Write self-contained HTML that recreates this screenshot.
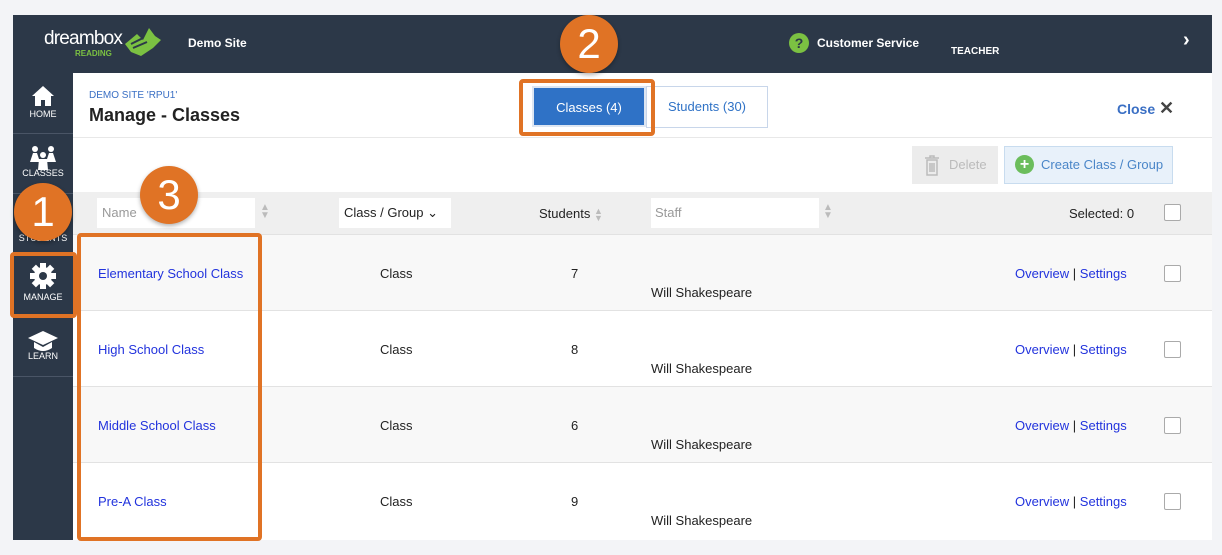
<!DOCTYPE html><html><head><style>
*{margin:0;padding:0;box-sizing:border-box}
body{width:1222px;height:555px;background:#f3f4f7;font-family:"Liberation Sans",sans-serif;position:relative;overflow:hidden;font-size:13px;color:#222}
.a{position:absolute}
.hdr{left:13px;top:15px;width:1199px;height:58px;background:#2c3848}
.side{left:13px;top:73px;width:60px;height:467px;background:#2c3848}
.main{left:73px;top:73px;width:1139px;height:467px;background:#fff}
.nav{position:absolute;left:0;width:60px;color:#fff;font-size:9px;text-align:center;border-bottom:1px solid #4a5566}
.row{position:absolute;left:0;width:1139px;height:76px;border-top:1px solid #e2e2e2}
.lk{color:#2233dd}
.cb{position:absolute;width:17px;height:17px;border:1.5px solid #aaa;background:#fff;border-radius:2px}
.badge{position:absolute;width:58px;height:58px;border-radius:50%;background:#e07325;color:#fff;font-size:42px;text-align:center;line-height:58px;box-shadow:0 2px 4px rgba(0,0,0,.3)}
.ob{position:absolute;border:4px solid #e07325;border-radius:4px}
</style></head><body>
<div class="a hdr">
 <div class="a" style="left:31px;top:13px;color:#fff;font-size:19px;letter-spacing:-.8px">dreambox</div>
 <div class="a" style="left:62px;top:34px;color:#7bc142;font-size:8px;font-weight:bold">READING</div>
 <svg class="a" style="left:110px;top:10px" width="40" height="34" viewBox="0 0 40 32"><path d="M2 18 L14 8 L20 14 L26 2 L32 10 L38 14 L30 22 L18 30 L8 26 Z" fill="#7bc142"/><path d="M8 18 L20 12 M10 22 L24 16" stroke="#2c3848" stroke-width="2"/></svg>
 <div class="a" style="left:175px;top:21px;color:#fff;font-size:12px;font-weight:bold">Demo Site</div>
 <div class="a" style="left:776px;top:18px;width:20px;height:20px;border-radius:50%;background:#7bc142;color:#2c3848;font-weight:bold;text-align:center;line-height:20px;font-size:14px">?</div>
 <div class="a" style="left:804px;top:21px;color:#fff;font-size:12px;font-weight:bold">Customer Service</div>
 <div class="a" style="left:938px;top:31px;color:#fff;font-size:10px;font-weight:bold">TEACHER</div>
 <div class="a" style="left:1170px;top:14px;color:#fff;font-size:20px;font-weight:bold">›</div>
</div>
<div class="a side">
 <div class="nav" style="top:0;height:61px"><svg width="24" height="22" viewBox="0 0 24 22" style="margin-top:12px"><path d="M12 1 L23 11 H20 V21 H14 V15 H10 V21 H4 V11 H1 Z" fill="#fff"/></svg><div>HOME</div></div>
 <div class="nav" style="top:61px;height:60px"><svg width="32" height="26" viewBox="0 0 32 26" style="margin-top:10px"><circle cx="8" cy="5" r="3" fill="#fff"/><circle cx="24" cy="5" r="3" fill="#fff"/><circle cx="16" cy="11" r="3" fill="#fff"/><path d="M3 18 L6 9 H10 L13 18 Z M19 18 L22 9 H26 L29 18 Z M11 26 L12 15 H20 L21 26 Z" fill="#fff"/></svg><div style="margin-top:-4px">CLASSES</div></div>
 <div class="nav" style="top:121px;height:60px"><div style="margin-top:39px">STUDENTS</div></div>
 <div class="nav" style="top:181px;height:63px"><svg width="28" height="28" viewBox="0 0 28 28" style="margin-top:8px"><g fill="#fff"><circle cx="14" cy="14" r="9"/><rect x="11" y="1" width="6" height="26"/><rect x="1" y="11" width="26" height="6"/><rect x="11" y="1" width="6" height="26" transform="rotate(45 14 14)"/><rect x="11" y="1" width="6" height="26" transform="rotate(-45 14 14)"/></g><circle cx="14" cy="14" r="4" fill="#2c3848"/></svg><div>MANAGE</div></div>
 <div class="nav" style="top:244px;height:60px"><svg width="32" height="24" viewBox="0 0 32 24" style="margin-top:12px"><path d="M16 2 L31 9 L16 16 L1 9 Z M7 13 V19 Q16 25 25 19 V13 L16 18 Z" fill="#fff"/></svg><div style="margin-top:-4px">LEARN</div></div>
</div>
<div class="a main">
 <div class="a" style="left:16px;top:17px;color:#3a6fc4;font-size:10px">DEMO SITE 'RPU1'</div>
 <div class="a" style="left:16px;top:32px;font-size:18px;font-weight:bold;color:#222">Manage - Classes</div>
 <div class="a" style="left:0;top:64px;width:1139px;border-top:1px solid #e8e8e8"></div>
 <div class="a" style="left:459px;top:13px;width:114px;height:41px;background:#2f72c6;color:#fff;text-align:center;line-height:39px;border:2px solid #dde6f2">Classes (4)</div>
 <div class="a" style="left:573px;top:13px;width:122px;height:42px;border:1px solid #c8d6ea;color:#2f72c6;text-align:center;line-height:40px">Students (30)</div>
 <div class="a" style="left:1044px;top:25px;color:#3a6fc4;font-size:14px;font-weight:bold">Close <span style="color:#444;font-size:18px">✕</span></div>
 <div class="a" style="left:839px;top:73px;width:86px;height:38px;background:#ececec;color:#bbb;line-height:38px;padding-left:37px">Delete</div>
 <svg class="a" style="left:851px;top:81px" width="16" height="22" viewBox="0 0 16 22"><path d="M1 4 H15 M6 4 V2 H10 V4 M3 6 H13 V21 H3 Z M6 9 V18 M8 9 V18 M10 9 V18" stroke="#bbb" stroke-width="1.5" fill="none"/></svg>
 <div class="a" style="left:931px;top:73px;width:169px;height:38px;background:#e8f1fa;border:1px solid #c8dcef;color:#4a86c8;line-height:36px;padding-left:36px">Create Class / Group</div>
 <div class="a" style="left:942px;top:82px;width:19px;height:19px;border-radius:50%;background:#6bbd5c;color:#fff;text-align:center;line-height:19px;font-weight:bold;font-size:16px">+</div>
 <div class="a" style="left:0;top:119px;width:1139px;height:42px;background:#efefef"></div>
 <div class="a" style="left:24px;top:125px;width:158px;height:30px;background:#fff;color:#999;line-height:30px;padding-left:5px">Name</div>
 <div class="a" style="left:187px;top:131px;color:#bbb;font-size:10px;line-height:8px">▲<br>▼</div>
 <div class="a" style="left:266px;top:125px;width:112px;height:30px;background:#fff;line-height:30px;padding-left:5px">Class / Group ⌄</div>
 <div class="a" style="left:466px;top:133px">Students <span style="color:#bbb;font-size:9px;display:inline-block;line-height:7px;vertical-align:middle">▲<br>▼</span></div>
 <div class="a" style="left:578px;top:125px;width:168px;height:30px;background:#fff;color:#999;line-height:30px;padding-left:4px">Staff</div>
 <div class="a" style="left:750px;top:131px;color:#bbb;font-size:10px;line-height:8px">▲<br>▼</div>
 <div class="a" style="left:996px;top:133px">Selected: 0</div>
 <div class="cb" style="left:1091px;top:131px"></div>
 <div class="row" style="top:161px;background:#f8f8f8"><div class="a lk" style="left:25px;top:31px">Elementary School Class</div><div class="a" style="left:307px;top:31px">Class</div><div class="a" style="left:498px;top:31px">7</div><div class="a" style="left:578px;top:50px">Will Shakespeare</div><div class="a" style="left:942px;top:31px"><span class="lk">Overview</span> | <span class="lk">Settings</span></div><div class="cb" style="left:1091px;top:30px"></div></div>
 <div class="row" style="top:237px;background:#fff"><div class="a lk" style="left:25px;top:31px">High School Class</div><div class="a" style="left:307px;top:31px">Class</div><div class="a" style="left:498px;top:31px">8</div><div class="a" style="left:578px;top:50px">Will Shakespeare</div><div class="a" style="left:942px;top:31px"><span class="lk">Overview</span> | <span class="lk">Settings</span></div><div class="cb" style="left:1091px;top:30px"></div></div>
 <div class="row" style="top:313px;background:#f8f8f8"><div class="a lk" style="left:25px;top:31px">Middle School Class</div><div class="a" style="left:307px;top:31px">Class</div><div class="a" style="left:498px;top:31px">6</div><div class="a" style="left:578px;top:50px">Will Shakespeare</div><div class="a" style="left:942px;top:31px"><span class="lk">Overview</span> | <span class="lk">Settings</span></div><div class="cb" style="left:1091px;top:30px"></div></div>
 <div class="row" style="top:389px;background:#fff"><div class="a lk" style="left:25px;top:31px">Pre-A Class</div><div class="a" style="left:307px;top:31px">Class</div><div class="a" style="left:498px;top:31px">9</div><div class="a" style="left:578px;top:50px">Will Shakespeare</div><div class="a" style="left:942px;top:31px"><span class="lk">Overview</span> | <span class="lk">Settings</span></div><div class="cb" style="left:1091px;top:30px"></div></div>
</div>
<div class="ob" style="left:10px;top:252px;width:67px;height:66px"></div>
<div class="ob" style="left:519px;top:79px;width:136px;height:57px"></div>
<div class="ob" style="left:77px;top:233px;width:185px;height:308px"></div>
<div class="badge" style="left:14px;top:183px">1</div>
<div class="badge" style="left:560px;top:15px">2</div>
<div class="badge" style="left:140px;top:166px">3</div>
</body></html>
